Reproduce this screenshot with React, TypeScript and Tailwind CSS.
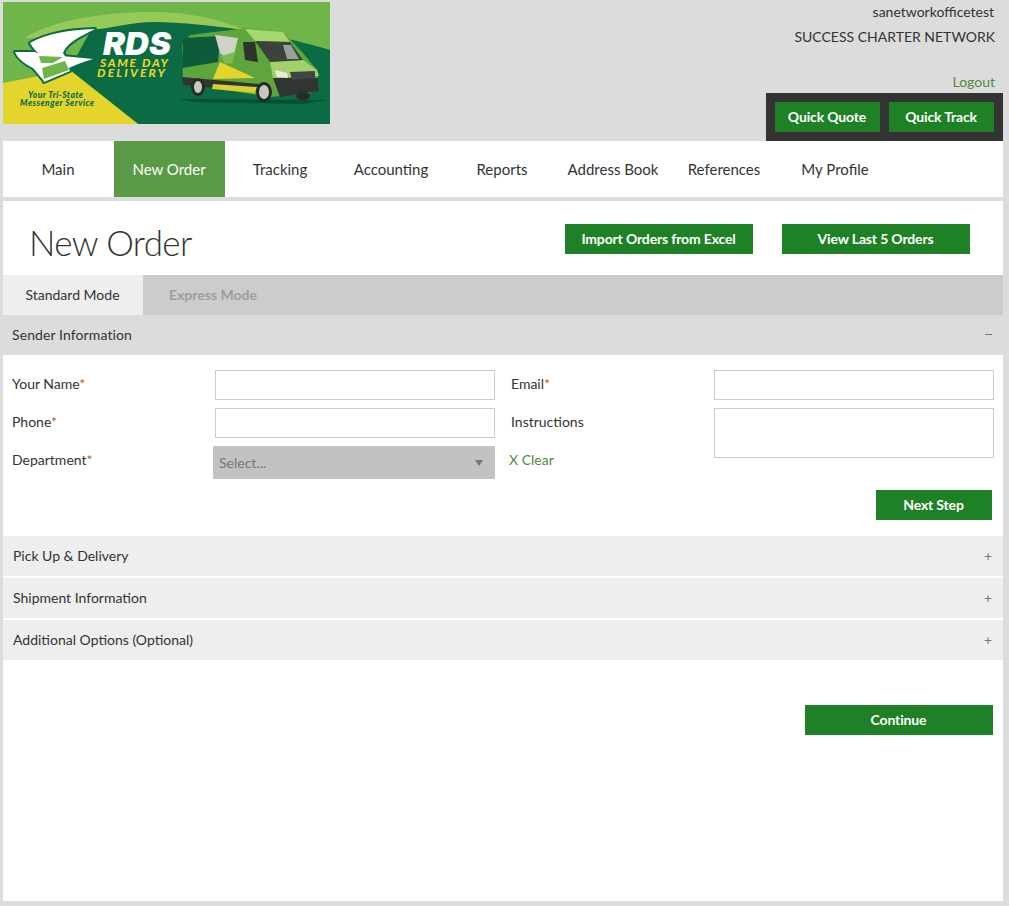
import React from 'react';

const navItems = ['Main', 'New Order', 'Tracking', 'Accounting', 'Reports', 'Address Book', 'References', 'My Profile'];

const birdShapes = [
  'M12 50 L32 50 L40 54 L41 79 L30 66 C22 62 15 57 12 50 Z',
  'M27 41 C45 31 65 28 92 27 C76 35 62 42 60 52 L36 52 C32 48 29 45 27 41 Z',
  'M59 54 L90 57 C80 60 72 63 66 66 Z',
  'M34 51 L61 52 L67 69 L41 80 Z',
];

const Logo: React.FC = () => (
  <svg width="327" height="122" viewBox="0 0 327 122" className="block">
    <rect width="327" height="122" fill="#6fb54a" />
    {/* swoosh */}
    <path d="M22 36 C45 20 95 10 150 10 C185 10 215 17 240 27 L150 26 L60 36 Z" fill="#96c957" />
    <path d="M88 28 C110 26 130 20 150 20 C180 20 210 24 233 27 C265 32 300 40 327 48 L327 122 L135 122 L66 68 Z" fill="#0b6b45" />
    <path d="M0 81 L67 68 L135 122 L0 122 Z" fill="#e3d52c" />
    {/* bird: dark outline first, white shapes on top */}
    {birdShapes.map((d) => (
      <path key={d} d={d} fill="#0b6b45" stroke="#0b6b45" strokeWidth="4" strokeLinejoin="round" />
    ))}
    {birdShapes.map((d) => (
      <path key={`w${d}`} d={d} fill="#ffffff" />
    ))}
    <path d="M36 54 L60 55 L50 61 L38 61 Z" fill="#6fb54a" />
    <path d="M39 66 L62 59 L66 68 L41 77 Z" fill="#6fb54a" />
    {/* van */}
    <path d="M176 97 L324 98 L300 102 L190 100 Z" fill="#084f31" />
    <path d="M179 43 L187 33 L244 26 L280 30 L300 51 L314 68 L316 86 L307 91 L267 95 L180 81 Z" fill="#5ea63c" />
    <path d="M180 36 L217 34 L215 60 L179 66 Z" fill="#0d5b3a" />
    <path d="M217 60 L252 76 L210 77 Z" fill="#e3d52c" />
    <path d="M212 33 L235 36 L229 61 L217 51 Z" fill="#cfd2c8" />
    <path d="M218 54 L232 50 L229 61 L222 62 Z" fill="#7dbb4f" />
    <path d="M242 27 L280 30 L287 40 L252 39 Z" fill="#a8d66f" />
    <path d="M267 60 L300 58 L314 68 L316 74 L270 76 Z" fill="#a3d06a" />
    <path d="M252 39 L287 40 L300 58 L267 60 Z" fill="#3c423c" />
    <path d="M280 43 L288 43 L296 57 L284 57 Z" fill="#9aa39a" />
    <path d="M240 40 L252 40 L255 60 L242 58 Z" fill="#2c342c" />
    <path d="M179 75 L267 83 L267 91 L180 83 Z" fill="#2f3632" />
    <path d="M210 82 L254 85 L252 91 L209 87 Z" fill="#d7cf33" />
    <path d="M270 76 L315 76 L316 89 L277 95 Z" fill="#303532" />
    <path d="M287 70 L312 69 L312 76 L289 78 Z" fill="#3f4542" />
    <path d="M272 68 L284 71 L285 76 L274 75 Z" fill="#e6ece6" />
    <ellipse cx="195" cy="85" rx="7" ry="9" fill="#262b28" />
    <ellipse cx="195" cy="85" rx="4" ry="6" fill="#c5c9c6" />
    <ellipse cx="261" cy="90" rx="8" ry="10" fill="#262b28" />
    <ellipse cx="261" cy="90" rx="5" ry="7" fill="#c5c9c6" />
    <ellipse cx="300" cy="94" rx="7" ry="4" fill="#262b28" />
    {/* logo text */}
    <text x="100" y="53" textLength="68" lengthAdjust="spacingAndGlyphs" fill="#ffffff" fontFamily="Inter, sans-serif" fontSize="31" fontWeight="900" fontStyle="italic">RDS</text>
    <text x="97" y="65" textLength="68" fill="#e3d52c" fontFamily="Lato, sans-serif" fontSize="12" fontWeight="900" fontStyle="italic">SAME DAY</text>
    <text x="94" y="75" textLength="68" fill="#e3d52c" fontFamily="Lato, sans-serif" fontSize="12" fontWeight="900" fontStyle="italic">DELIVERY</text>
    <text x="25" y="96" textLength="55" fill="#0b6b45" fontFamily="Lato, sans-serif" fontSize="8.5" fontWeight="900" fontStyle="italic">Your Tri-State</text>
    <text x="17" y="104" textLength="74" fill="#0b6b45" fontFamily="Lato, sans-serif" fontSize="8.5" fontWeight="900" fontStyle="italic">Messenger Service</text>
  </svg>
);

const GreenButton: React.FC<{ label: string; className: string }> = ({ label, className }) => (
  <button className={`h-[30px] pb-[2px] pr-[1px] bg-[#1f8125] text-white font-bold text-[14px] tracking-[-0.15px] flex items-center justify-center ${className}`}>
    {label}
  </button>
);

const Field: React.FC<{ label: string; required?: boolean; className?: string }> = ({ label, required, className }) => (
  <span className={`text-[14px] text-[#333] leading-[20px] ${className ?? ''}`}>
    {label}
    {required && <span className="text-[#b85c1c]">*</span>}
  </span>
);

const Section: React.FC<{ title: string }> = ({ title }) => (
  <div className="h-10 pb-[2px] bg-[#eeeeee] flex items-center justify-between pl-[10px] pr-[11px] text-[14px] text-[#333]">
    <span>{title}</span>
    <span className="text-[#777]">+</span>
  </div>
);

const App: React.FC = () => {
  return (
    <div className="w-[1009px] h-[906px] bg-[#dcdcdc] pl-[3px] pr-[6px] overflow-hidden text-[#333]" style={{ fontFamily: 'Lato, sans-serif' }}>
      {/* Header */}
      <div className="h-[141px] flex justify-between">
        <div className="pt-[2px]">
          <Logo />
        </div>
        <div className="flex flex-col items-end">
          <div className="pr-[9px] text-right text-[14px] leading-[20px] text-[#333] pt-[2px]">sanetworkofficetest</div>
          <div className="pr-[8px] text-right text-[14px] leading-[20px] text-[#333] pt-[5px] h-[25px]">SUCCESS CHARTER NETWORK</div>
          <div className="pr-[8px] text-right text-[14px] leading-[20px] text-[#4f8a3c] mt-[25px] h-[20px]">Logout</div>
          <div className="mt-auto w-[237px] h-12 bg-[#333333] flex items-center justify-center gap-[9px]">
            <GreenButton label="Quick Quote" className="w-[105px]" />
            <GreenButton label="Quick Track" className="w-[105px]" />
          </div>
        </div>
      </div>

      {/* Nav */}
      <div className="h-14 bg-white flex">
        {navItems.map((item) => (
          <div
            key={item}
            className={`w-[111px] pr-[1px] flex items-center justify-center text-[15px] ${item === 'New Order' ? 'bg-[#5a9a46] text-white' : 'text-[#333]'}`}
          >
            {item}
          </div>
        ))}
      </div>

      {/* Page */}
      <div className="mt-1 h-[700px] bg-white">
        <div className="h-[74px] flex items-start pl-[26px] pr-[33px]">
          <h1 className="flex-1 text-[35px] tracking-[-0.6px] font-light leading-[44px] text-[#333] mt-[19px]">New Order</h1>
          <GreenButton label="Import Orders from Excel" className="w-[188px] mt-[23px]" />
          <GreenButton label="View Last 5 Orders" className="w-[188px] mt-[23px] ml-[29px]" />
        </div>

        <div className="h-10 pb-[2px] bg-[#cccccc] flex text-[14px]">
          <div className="w-[140px] -mb-[2px] pb-[2px] pr-[1px] bg-[#eeeeee] flex items-center justify-center text-[#333]">Standard Mode</div>
          <div className="w-[140px] flex items-center justify-center text-[#999] font-bold opacity-90">Express Mode</div>
        </div>

        <div className="h-10 pb-[2px] bg-[#dcdcdc] flex items-center justify-between pl-[9px] pr-[11px] text-[14px] text-[#333]">
          <span className="tracking-[0.1px]">Sender Information</span>
          <span className="w-[7px] h-px bg-[#777]" />
        </div>

        {/* Sender form */}
        <div className="h-[181px] relative">
          <div className="flex pt-[15px] pl-[8px]">
            <div className="w-[487px] flex flex-col gap-2">
              <div className="flex items-start h-[30px]">
                <Field label="Your Name" required className="w-[204px] pt-[4px] pl-[1px]" />
                <input className="w-[280px] h-[30px] border border-[#cccccc] bg-white" />
              </div>
              <div className="flex items-start h-[30px]">
                <Field label="Phone" required className="w-[204px] pt-[4px] pl-[1px]" />
                <input className="w-[280px] h-[30px] border border-[#cccccc] bg-white" />
              </div>
              <div className="flex items-start h-[33px]">
                <Field label="Department" required className="w-[202px] pt-[4px] pl-[1px]" />
                <div className="w-[282px] h-[33px] bg-[#c2c2c2] rounded-[1px] flex items-center justify-between pl-[6px] pr-[12px] text-[14px] text-[#777]">
                  <span>Select...</span>
                  <span className="w-0 h-0 border-l-[4px] border-r-[4px] border-t-[6px] border-l-transparent border-r-transparent border-t-[#777]" />
                </div>
              </div>
            </div>
            <div className="flex-1 pl-[13px]">
              <div className="flex items-start h-[30px] mb-2">
                <Field label="Email" required className="w-[203px] pt-[4px]" />
                <input className="w-[280px] h-[30px] border border-[#cccccc] bg-white" />
              </div>
              <div className="flex items-start">
                <Field label="Instructions" className="w-[203px] pt-[4px]" />
                <textarea className="w-[280px] h-[50px] border border-[#cccccc] bg-white resize-none block" />
              </div>
              <div className="text-[14px] leading-[20px] text-[#4f8a3c] -mt-[8px] -ml-[2px]">X Clear</div>
            </div>
          </div>
          <div className="absolute right-[11px] top-[135px]">
            <GreenButton label="Next Step" className="w-[116px]" />
          </div>
        </div>

        <div className="flex flex-col gap-[2px]">
          <Section title="Pick Up & Delivery" />
          <Section title="Shipment Information" />
          <Section title="Additional Options (Optional)" />
        </div>

        <div className="flex justify-end pr-[10px] pt-[45px]">
          <GreenButton label="Continue" className="w-[188px]" />
        </div>
      </div>
    </div>
  );
};

export default App;
